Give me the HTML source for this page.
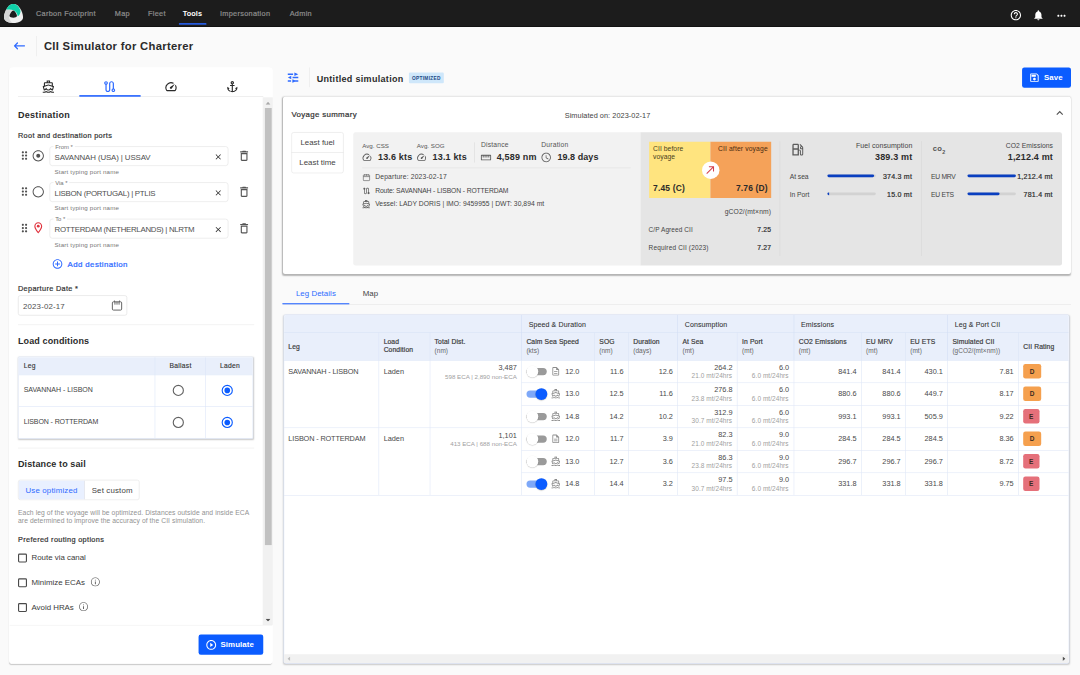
<!DOCTYPE html>
<html lang="en">
<head>
<meta charset="utf-8">
<title>CII Simulator for Charterer</title>
<style>
html,body{margin:0;padding:0;}
html{width:1080px;height:675px;overflow:hidden;background:#fafafa;}
body{width:1920px;height:1200px;position:relative;transform:scale(.5625);transform-origin:0 0;background:#fafafa;
  font-family:"Liberation Sans",sans-serif;font-size:14px;color:#333;overflow:hidden;}
*{box-sizing:border-box;}
.abs{position:absolute;}
svg{display:block;}
b,.b{font-weight:bold;}
/* NAV */
#nav{position:absolute;left:0;top:0;width:1920px;height:47.500px;background:#1c1c1c;border-bottom:1px solid #0c0c0c;}
#nav .it{position:absolute;top:17px;font-size:13px;font-weight:normal;-webkit-text-stroke:.36px;letter-spacing:.55px;color:#8d8d8d;white-space:nowrap;line-height:16px;}
#nav .it.on{color:#fff;font-weight:bold;-webkit-text-stroke:0;letter-spacing:.1px;}
#nav .ul{position:absolute;left:318px;top:41px;width:49px;height:3px;background:#2559dc;border-radius:1px;}
/* TITLE */
#ttl{position:absolute;left:78px;top:68.700px;font-size:20px;font-weight:bold;color:#2b2b2b;line-height:26px;letter-spacing:.55px;white-space:nowrap;}
.vdiv{position:absolute;width:1px;background:#e6e6e6;}
/* CARDS */
.card{position:absolute;background:#fff;border-radius:6px;box-shadow:0 1px 3px rgba(0,0,0,.12),0 1px 1px rgba(0,0,0,.06);}

.h16{font-size:16px;font-weight:bold;color:#2b2b2b;line-height:20px;letter-spacing:.5px;white-space:nowrap;}
.lab{font-size:13px;font-weight:normal;-webkit-text-stroke:.36px;color:#333;line-height:16px;letter-spacing:.6px;white-space:nowrap;}
.hr{left:15px;width:420px;height:1px;background:#e9e9e9;}
.prow{position:absolute;left:0;width:449px;height:64px;}
.prow .drag{left:15px;top:6px;}
.prow .pin{left:39px;top:6px;}
.prow .inp{position:absolute;left:71px;top:.500px;width:318px;height:35px;border:1px solid #e0e0e0;border-radius:5px;background:#fff;}
.prow .fl{position:absolute;left:6px;top:-7px;padding:0 3px;background:#fff;font-size:10.500px;line-height:12px;color:#777;white-space:nowrap;}
.prow .tx{position:absolute;left:8px;top:9px;font-size:14px;line-height:18px;color:#505050;white-space:nowrap;letter-spacing:-.2px;}
.prow .clr{left:291px;top:10px;}
.prow .del{left:404.500px;top:6px;}
.prow .hlp{position:absolute;left:80px;top:41px;font-size:11px;line-height:13px;color:#777;white-space:nowrap;letter-spacing:.3px;}
.ltab{border:1px solid #dbe5f8;border-radius:2px;background:#fff;box-shadow:0 2px 3px rgba(0,0,0,.22);overflow:hidden;}
.ltab .th{font-size:12px;font-weight:normal;-webkit-text-stroke:.22px;letter-spacing:.5px;color:#333;line-height:14px;}
.ltab .td{font-size:12.500px;color:#444;line-height:14px;letter-spacing:-.2px;}
.rad{width:20px;height:20px;border-radius:50%;border:2px solid #636363;background:#fff;}
.rad.on{border-color:#0b5cff;border-width:2px;}
.rad.on i{position:absolute;left:3px;top:3px;width:10px;height:10px;border-radius:50%;background:#0b5cff;}
.cb{left:15px;width:16px;height:16px;border:2px solid #4a4a4a;border-radius:2.500px;background:#fff;margin-top:1.500px;}
.cbl{left:39px;font-size:14px;line-height:18px;color:#3a3a3a;white-space:nowrap;}
.btn{background:#0b5cff;border-radius:4px;}

.sl{font-size:11px;line-height:14px;color:#555;white-space:nowrap;letter-spacing:0;}
.sv{font-size:16px;font-weight:bold;line-height:20px;color:#2b2b2b;white-space:nowrap;letter-spacing:.3px;}
.dl{font-size:12px;line-height:15px;color:#444;white-space:nowrap;letter-spacing:-.1px;}
.bar{width:86px;height:5px;border-radius:3px;background:#d2d2d2;}
.bar i{position:absolute;left:0;top:0;height:5px;border-radius:3px;background:#0a3fc0;}
.bv{width:78.500px;text-align:right;font-size:12.500px;font-weight:normal;-webkit-text-stroke:.33px;letter-spacing:.4px;line-height:15px;color:#2b2b2b;white-space:nowrap;}

#tbl{position:absolute;overflow:hidden;background:#fff;border:1px solid #d3def5;border-radius:4px;box-shadow:0 2px 3px rgba(0,0,0,.2);}
.gh{font-size:12.500px;font-weight:normal;-webkit-text-stroke:.12px;line-height:15px;color:#333;white-space:nowrap;letter-spacing:.2px;}
.ch{font-size:12px;font-weight:normal;-webkit-text-stroke:.33px #3a3a3a;line-height:15.500px;color:#3a3a3a;white-space:nowrap;letter-spacing:.2px;}
.ch .u{font-weight:normal;-webkit-text-stroke:0;color:#666;font-size:11.500px;letter-spacing:.05px;}
.td{font-size:13px;line-height:16px;color:#4a4a4a;white-space:nowrap;}
.sub{font-size:11.500px;line-height:12px;color:#a0a0a0;white-space:nowrap;letter-spacing:.12px;}
.rt{width:32px;height:26px;border-radius:4px;font-size:11.500px;font-weight:bold;line-height:26px;text-align:center;color:#3a2a20;}
</style>
</head>
<body>
<!-- ================= NAV ================= -->
<div id="nav">
  <svg class="abs" style="left:7px;top:7px" width="34" height="34" viewBox="0 0 100 100">
    <path d="M50 0C80 0 100 46 100 70C100 92 74 100 50 100C26 100 0 92 0 70C0 46 20 0 50 0Z" fill="#f0f0f0"/>
    <path d="M13 31C4 45 0 60 0 70C0 90 22 99 46 100C36 92 29 84 27 72C24 60 30 45 50 33C38 29 24 29 13 31Z" fill="#d6d6d6"/>
    <path d="M12 31C20 12 34 0 50 0C66 0 78 14 85 32C89 44 84 58 72 64C70 50 62 38 50 33C38 29 24 29 12 31Z" fill="#0fd0a8"/>
    <path d="M49 34C56 34 68 54 68 62C68 70 58 72 49 72C40 72 29 70 29 62C29 54 42 34 49 34Z" fill="#1c1c1c"/>
  </svg>
  <div class="it" style="left:64px">Carbon Footprint</div>
  <div class="it" style="left:204px">Map</div>
  <div class="it" style="left:263px">Fleet</div>
  <div class="it on" style="left:325px">Tools</div>
  <div class="it" style="left:391px">Impersonation</div>
  <div class="it" style="left:515px">Admin</div>
  <div class="ul"></div>
  <svg class="abs" style="left:1795px;top:16px" width="22" height="22" viewBox="0 0 24 24" fill="#fff"><path d="M11 18h2v-2h-2v2zm1-16C6.48 2 2 6.48 2 12s4.48 10 10 10 10-4.48 10-10S17.52 2 12 2zm0 18c-4.41 0-8-3.59-8-8s3.59-8 8-8 8 3.59 8 8-3.59 8-8 8zm0-14c-2.210 0-4 1.79-4 4h2c0-1.1.9-2 2-2s2 .9 2 2c0 2-3 1.75-3 5h2c0-2.25 3-2.5 3-5 0-2.21-1.79-4-4-4z"/></svg>
  <svg class="abs" style="left:1835px;top:16px" width="22" height="22" viewBox="0 0 24 24" fill="#fff"><path d="M12 22c1.1 0 2-.9 2-2h-4c0 1.1.89 2 2 2zm6-6v-5c0-3.07-1.64-5.64-4.5-6.32V4c0-.83-.67-1.5-1.5-1.5s-1.5.67-1.5 1.5v.68C7.63 5.36 6 7.92 6 11v5l-2 2v1h16v-1l-2-2z"/></svg>
  <svg class="abs" style="left:1876px;top:17px" width="22" height="22" viewBox="0 0 24 24" fill="#fff"><path d="M6 10c-1.1 0-2 .9-2 2s.9 2 2 2 2-.9 2-2-.9-2-2-2zm12 0c-1.1 0-2 .9-2 2s.9 2 2 2 2-.9 2-2-.9-2-2-2zm-6 0c-1.1 0-2 .9-2 2s.9 2 2 2 2-.9 2-2-.9-2-2-2z"/></svg>
</div>

<!-- ================= TITLE ROW ================= -->
<svg class="abs" style="left:23px;top:73px" width="24" height="17" viewBox="0 0 24 17" fill="none" stroke="#2f6bff" stroke-width="2.300" stroke-linecap="round" stroke-linejoin="round"><path d="M20.500 8.500H3M8 3.300L2.800 8.500L8 13.700"/></svg>
<div class="vdiv" style="left:64px;top:64px;height:36px"></div>
<div id="ttl">CII Simulator for Charterer</div>

<!-- ================= LEFT CARD ================= -->
<div class="card" id="left" style="left:17px;top:120px;width:467.500px;height:1059.500px;box-shadow:-1px 0 0 0 #fff,-1px 2.500px 2px -1px rgba(0,0,0,.2);">
<!--LEFT-START-->
  <!-- tabs -->
  <div class="abs" style="left:15px;top:51px;width:436px;height:1px;background:#e3e3e3"></div>
  <div class="abs" style="left:124px;top:49px;width:109px;height:3px;background:#2f6bff"></div>
  <svg class="abs" style="left:57px;top:22px" width="24" height="24" viewBox="0 0 24 24" fill="#2b2b2b"><path d="M13 3v1h-2V3h2m-1 7.11l5.38 1.77 2.39.78-1.12 3.97c-.54-.3-.94-.71-1.14-.94L16 13.96l-1.51 1.72c-.34.4-1.28 1.32-2.49 1.32s-2.15-.92-2.49-1.32L8 13.96l-1.51 1.72c-.2.23-.6.63-1.14.93l-1.13-3.96 2.4-.79L12 10.11M15 1H9v3H6c-1.1 0-2 .9-2 2v4.62l-1.29.42c-.26.08-.48.26-.6.5s-.15.52-.06.78L3.950 19H4c1.6 0 3.02-.88 4-2 .98 1.12 2.4 2 4 2s3.02-.88 4-2c.98 1.12 2.4 2 4 2h.05l1.89-6.680c.08-.26.06-.54-.06-.78s-.34-.42-.6-.5L20 10.620V6c0-1.1-.9-2-2-2h-3V1zM6 9.970V6h12v3.970L12 8 6 9.970zm10 9.710c-1.220.85-2.610 1.280-4 1.280s-2.780-.43-4-1.280C6.780 20.530 5.390 21 4 21H2v2h2c1.380 0 2.740-.35 4-.99 1.260.64 2.630.97 4 .97s2.740-.32 4-.97c1.260.65 2.620.99 4 .99h2v-2h-2c-1.390 0-2.780-.47-4-1.320z"/></svg>
  <svg class="abs" style="left:165px;top:21px" width="26" height="26" viewBox="0 0 24 24" fill="#2f6bff"><path d="M19 15.180V7c0-2.210-1.790-4-4-4s-4 1.790-4 4v10c0 1.100-.9 2-2 2s-2-.9-2-2V8.820C8.160 8.400 9 7.300 9 6c0-1.660-1.340-3-3-3S3 4.340 3 6c0 1.300.84 2.400 2 2.820V17c0 2.210 1.790 4 4 4s4-1.790 4-4V7c0-1.100.9-2 2-2s2 .9 2 2v8.180c-1.160.41-2 1.510-2 2.820 0 1.660 1.340 3 3 3s3-1.340 3-3c0-1.300-.84-2.400-2-2.820z"/><circle cx="6" cy="6" r="1.100" fill="#fff"/><circle cx="18" cy="18" r="1.100" fill="#fff"/></svg>
  <svg class="abs" style="left:275px;top:22px" width="24" height="24" viewBox="0 0 24 24" fill="#2b2b2b"><path d="M20.380 8.570l-1.230 1.850a8 8 0 0 1-.22 7.580H5.070A8 8 0 0 1 15.580 6.850l1.850-1.230A10 10 0 0 0 3.350 19a2 2 0 0 0 1.720 1h13.850a2 2 0 0 0 1.740-1 10 10 0 0 0-.27-10.440zm-9.790 6.840a2 2 0 0 0 2.830 0l5.660-8.490-8.490 5.660a2 2 0 0 0 0 2.830z"/></svg>
  <svg class="abs" style="left:384px;top:22px" width="24" height="24" viewBox="0 0 24 24" fill="#2b2b2b"><path d="M17 15l1.550 1.550c-.96 1.690-3.330 3.040-5.550 3.370V11h3V9h-3V7.820C14.160 7.400 15 6.300 15 5c0-1.650-1.350-3-3-3S9 3.350 9 5c0 1.300.84 2.400 2 2.820V9H8v2h3v8.920c-2.220-.33-4.590-1.680-5.550-3.370L7 15l-4-3v3c0 3.880 4.920 7 9 7s9-3.120 9-7v-3l-4 3zM12 4c.55 0 1 .45 1 1s-.45 1-1 1-1-.45-1-1 .45-1 1-1z"/></svg>

  <!-- scrollbar -->
  <div class="abs" style="left:450px;top:53px;width:17.500px;height:938px;background:#f1f1f1"></div>
  <div class="abs" style="left:453.500px;top:72px;width:12px;height:777px;background:#c1c1c1"></div>
  <svg class="abs" style="left:455px;top:61px" width="9" height="5" viewBox="0 0 9 5"><path d="M0 5L4.500 0L9 5z" fill="#a8a8a8"/></svg>
  <svg class="abs" style="left:455px;top:980px" width="9" height="5" viewBox="0 0 9 5"><path d="M0 0L4.500 5L9 0z" fill="#505050"/></svg>

  <!-- Destination -->
  <div class="h16 abs" style="left:15px;top:74px">Destination</div>
  <div class="lab abs" style="left:15px;top:114px">Root and destination ports</div>

  <!-- rows -->
  <div class="prow" style="top:139px">
    <svg class="abs drag" width="23" height="23" viewBox="0 0 24 24" fill="#505050"><path d="M11 18c0 1.100-.9 2-2 2s-2-.9-2-2 .9-2 2-2 2 .9 2 2zm-2-8c-1.100 0-2 .9-2 2s.9 2 2 2 2-.9 2-2-.9-2-2-2zm0-6c-1.100 0-2 .9-2 2s.9 2 2 2 2-.9 2-2-.9-2-2-2zm6 4c1.100 0 2-.9 2-2s-.9-2-2-2-2 .9-2 2 .9 2 2 2zm0 2c-1.100 0-2 .9-2 2s.9 2 2 2 2-.9 2-2-.9-2-2-2zm0 6c-1.100 0-2 .9-2 2s.9 2 2 2 2-.9 2-2-.9-2-2-2z"/></svg>
    <svg class="abs pin" width="24" height="24" viewBox="0 0 24 24" fill="#505050"><path d="M12 8.500c-1.930 0-3.500 1.570-3.500 3.500s1.570 3.500 3.500 3.500 3.500-1.570 3.500-3.500-1.570-3.500-3.500-3.500zm0-6.500C6.480 2 2 6.480 2 12s4.480 10 10 10 10-4.480 10-10S17.520 2 12 2zm0 18.300c-4.580 0-8.300-3.720-8.300-8.300s3.720-8.300 8.300-8.300 8.300 3.720 8.300 8.300-3.720 8.300-8.300 8.300z"/></svg>
    <div class="inp"><span class="fl">From *</span><span class="tx">SAVANNAH (USA) | USSAV</span>
      <svg class="abs clr" width="16" height="16" viewBox="0 0 24 24" fill="#2b2b2b"><path d="M19 6.410L17.590 5 12 10.590 6.410 5 5 6.410 10.590 12 5 17.590 6.410 19 12 13.410 17.590 19 19 17.590 13.410 12z"/></svg>
    </div>
    <svg class="abs del" width="24" height="24" viewBox="0 0 24 24" fill="#555"><path d="M6 19c0 1.100.9 2 2 2h8c1.100 0 2-.9 2-2V7H6v12zM8 9h8v10H8V9zm7.500-5l-1-1h-5l-1 1H5v2h14V4z"/></svg>
    <div class="hlp">Start typing port name</div>
  </div>
  <div class="prow" style="top:203px">
    <svg class="abs drag" width="23" height="23" viewBox="0 0 24 24" fill="#505050"><path d="M11 18c0 1.100-.9 2-2 2s-2-.9-2-2 .9-2 2-2 2 .9 2 2zm-2-8c-1.100 0-2 .9-2 2s.9 2 2 2 2-.9 2-2-.9-2-2-2zm0-6c-1.100 0-2 .9-2 2s.9 2 2 2 2-.9 2-2-.9-2-2-2zm6 4c1.100 0 2-.9 2-2s-.9-2-2-2-2 .9-2 2 .9 2 2 2zm0 2c-1.100 0-2 .9-2 2s.9 2 2 2 2-.9 2-2-.9-2-2-2zm0 6c-1.100 0-2 .9-2 2s.9 2 2 2 2-.9 2-2-.9-2-2-2z"/></svg>
    <svg class="abs pin" width="24" height="24" viewBox="0 0 24 24" fill="#505050"><path d="M12 2C6.480 2 2 6.480 2 12s4.480 10 10 10 10-4.480 10-10S17.520 2 12 2zm0 18.300c-4.580 0-8.300-3.720-8.300-8.300s3.720-8.300 8.300-8.300 8.300 3.720 8.300 8.300-3.720 8.300-8.300 8.300z"/></svg>
    <div class="inp"><span class="fl">Via *</span><span class="tx" style="letter-spacing:-.5px">LISBON (PORTUGAL) | PTLIS</span>
      <svg class="abs clr" width="16" height="16" viewBox="0 0 24 24" fill="#2b2b2b"><path d="M19 6.410L17.590 5 12 10.590 6.410 5 5 6.410 10.590 12 5 17.590 6.410 19 12 13.410 17.590 19 19 17.590 13.410 12z"/></svg>
    </div>
    <svg class="abs del" width="24" height="24" viewBox="0 0 24 24" fill="#555"><path d="M6 19c0 1.100.9 2 2 2h8c1.100 0 2-.9 2-2V7H6v12zM8 9h8v10H8V9zm7.500-5l-1-1h-5l-1 1H5v2h14V4z"/></svg>
    <div class="hlp">Start typing port name</div>
  </div>
  <div class="prow" style="top:268px">
    <svg class="abs drag" width="23" height="23" viewBox="0 0 24 24" fill="#505050"><path d="M11 18c0 1.100-.9 2-2 2s-2-.9-2-2 .9-2 2-2 2 .9 2 2zm-2-8c-1.100 0-2 .9-2 2s.9 2 2 2 2-.9 2-2-.9-2-2-2zm0-6c-1.100 0-2 .9-2 2s.9 2 2 2 2-.9 2-2-.9-2-2-2zm6 4c1.100 0 2-.9 2-2s-.9-2-2-2-2 .9-2 2 .9 2 2 2zm0 2c-1.100 0-2 .9-2 2s.9 2 2 2 2-.9 2-2-.9-2-2-2zm0 6c-1.100 0-2 .9-2 2s.9 2 2 2 2-.9 2-2-.9-2-2-2z"/></svg>
    <svg class="abs pin" width="24" height="24" viewBox="0 0 24 24" fill="#e0343f" style="left:39px;top:5px"><path d="M12 2C8.130 2 5 5.130 5 9c0 5.250 7 13 7 13s7-7.750 7-13c0-3.870-3.130-7-7-7zM7 9c0-2.760 2.240-5 5-5s5 2.240 5 5c0 2.880-2.880 7.190-5 9.880C9.920 16.210 7 11.850 7 9z"/><circle cx="12" cy="9" r="2.500"/></svg>
    <div class="inp"><span class="fl">To *</span><span class="tx" style="letter-spacing:-.55px">ROTTERDAM (NETHERLANDS) | NLRTM</span>
      <svg class="abs clr" width="16" height="16" viewBox="0 0 24 24" fill="#2b2b2b"><path d="M19 6.410L17.590 5 12 10.590 6.410 5 5 6.410 10.590 12 5 17.590 6.410 19 12 13.410 17.590 19 19 17.590 13.410 12z"/></svg>
    </div>
    <svg class="abs del" width="24" height="24" viewBox="0 0 24 24" fill="#555"><path d="M6 19c0 1.100.9 2 2 2h8c1.100 0 2-.9 2-2V7H6v12zM8 9h8v10H8V9zm7.500-5l-1-1h-5l-1 1H5v2h14V4z"/></svg>
    <div class="hlp">Start typing port name</div>
  </div>

  <!-- add destination -->
  <svg class="abs" style="left:75px;top:338.500px" width="20.500" height="20.500" viewBox="0 0 24 24" fill="#2f6bff"><path d="M13 7h-2v4H7v2h4v4h2v-4h4v-2h-4V7zm-1-5C6.480 2 2 6.480 2 12s4.480 10 10 10 10-4.480 10-10S17.520 2 12 2zm0 18c-4.410 0-8-3.590-8-8s3.590-8 8-8 8 3.590 8 8-3.590 8-8 8z"/></svg>
  <div class="abs" style="left:103px;top:339.500px;font-size:14px;font-weight:normal;-webkit-text-stroke:.42px;color:#2f6bff;line-height:18px;letter-spacing:.72px">Add destination</div>

  <!-- departure -->
  <div class="lab abs" style="left:15px;top:386px">Departure Date *</div>
  <div class="abs" style="left:15px;top:405px;width:194px;height:36px;border:1px solid #dcdcdc;border-radius:4px;background:#fff">
    <span class="abs" style="left:8px;top:9px;font-size:14px;line-height:18px;color:#505050;letter-spacing:.25px">2023-02-17</span>
    <svg class="abs" style="left:164px;top:6px" width="22" height="22" viewBox="0 0 24 24" fill="none" stroke="#5a5a5a" stroke-width="1.800"><rect x="3" y="5" width="18" height="16" rx="2"/><path d="M7 2.500v2.500M17 2.500v2.500M8 5v5.500M12 5v5.500M16 5v5.500"/></svg>
  </div>
  <div class="hr abs" style="top:457px"></div>

  <!-- load conditions -->
  <div class="h16 abs" style="left:15px;top:477px;letter-spacing:.2px">Load conditions</div>
  <div class="abs ltab" style="left:15px;top:514px;width:418px;height:146px">
    <div class="abs" style="left:0;top:0;width:418px;height:31px;background:#e9effb"></div>
    <div class="abs" style="left:0;top:31px;width:418px;height:1px;background:#dbe5f8"></div>
    <div class="abs" style="left:0;top:87px;width:418px;height:1px;background:#dbe5f8"></div>
    <div class="abs" style="left:242px;top:0;width:1px;height:144px;background:#dbe5f8"></div>
    <div class="abs" style="left:332px;top:0;width:1px;height:144px;background:#dbe5f8"></div>
    <div class="abs th" style="left:9px;top:9px">Leg</div>
    <div class="abs th" style="left:243px;top:9px;width:90px;text-align:center">Ballast</div>
    <div class="abs th" style="left:333px;top:9px;width:86px;text-align:center">Laden</div>
    <div class="abs td" style="left:9px;top:51px;letter-spacing:-.05px">SAVANNAH - LISBON</div>
    <div class="abs td" style="left:9px;top:108px">LISBON - ROTTERDAM</div>
    <div class="abs rad" style="left:274px;top:49px"></div>
    <div class="abs rad on" style="left:361px;top:49px"><i></i></div>
    <div class="abs rad" style="left:274px;top:105.500px"></div>
    <div class="abs rad on" style="left:361px;top:105.500px"><i></i></div>
  </div>
  <div class="hr abs" style="top:676px"></div>

  <!-- distance to sail -->
  <div class="h16 abs" style="left:15px;top:695px;letter-spacing:.2px">Distance to sail</div>
  <div class="abs" style="left:15px;top:733px;width:216px;height:36px;border:1px solid #e2e2e2;border-radius:4px;background:#fff;overflow:hidden">
    <div class="abs" style="left:0;top:0;width:117.500px;height:34px;background:#e9f0ff;border-right:1px solid #e2e2e2"></div>
    <div class="abs" style="left:0;top:8px;width:117px;text-align:center;font-size:14px;line-height:18px;color:#2f6bff;letter-spacing:.3px">Use optimized</div>
    <div class="abs" style="left:118px;top:8px;width:97px;text-align:center;font-size:14px;line-height:18px;color:#444;letter-spacing:.3px">Set custom</div>
  </div>
  <div class="abs" style="left:15px;top:786px;width:430px;font-size:12px;line-height:13.300px;color:#929292;letter-spacing:.14px;white-space:nowrap">Each leg of the voyage will be optimized. Distances outside and inside ECA<br>are determined to improve the accuracy of the CII simulation.</div>
  <div class="lab abs" style="left:15px;top:832px">Prefered routing options</div>

  <div class="abs cb" style="top:862px"></div><div class="abs cbl" style="top:862px">Route via canal</div>
  <div class="abs cb" style="top:906px"></div><div class="abs cbl" style="top:906px">Minimize ECAs</div>
  <svg class="abs" style="left:143px;top:905px" width="19" height="19" viewBox="0 0 24 24" fill="#555"><path d="M11 7h2v2h-2zm0 4h2v6h-2zm1-9C6.480 2 2 6.480 2 12s4.480 10 10 10 10-4.480 10-10S17.520 2 12 2zm0 18.500c-4.690 0-8.500-3.810-8.500-8.500S7.310 3.500 12 3.500s8.500 3.810 8.500 8.500-3.810 8.500-8.500 8.500z"/></svg>
  <div class="abs cb" style="top:950px"></div><div class="abs cbl" style="top:950px">Avoid HRAs</div>
  <svg class="abs" style="left:122px;top:949px" width="19" height="19" viewBox="0 0 24 24" fill="#555"><path d="M11 7h2v2h-2zm0 4h2v6h-2zm1-9C6.480 2 2 6.480 2 12s4.480 10 10 10 10-4.480 10-10S17.520 2 12 2zm0 18.500c-4.690 0-8.500-3.810-8.500-8.500S7.310 3.500 12 3.500s8.500 3.810 8.500 8.500-3.810 8.500-8.500 8.500z"/></svg>

  <!-- footer -->
  <div class="abs" style="left:0;top:991px;width:467px;height:1px;background:#efefef"></div>
  <div class="abs btn" style="left:335.500px;top:1008px;width:115.500px;height:36px">
    <svg class="abs" style="left:12px;top:7.500px" width="21" height="21" viewBox="0 0 24 24" fill="#fff"><path d="M10 16.500l6-4.500-6-4.500v9zM12 2C6.480 2 2 6.480 2 12s4.480 10 10 10 10-4.480 10-10S17.520 2 12 2zm0 18c-4.410 0-8-3.590-8-8s3.590-8 8-8 8 3.590 8 8-3.590 8-8 8z"/></svg>
    <span class="abs" style="left:39.500px;top:10px;font-size:14px;font-weight:bold;line-height:17px;color:#fff;letter-spacing:.15px">Simulate</span>
  </div>
<!--LEFT-END-->
</div>

<!-- ================= RIGHT TOOLBAR ================= -->
<div id="rtool">
<!--RTOOL-START-->
  <svg class="abs" style="left:508.500px;top:126px" width="24" height="24" viewBox="0 0 24 24" fill="#2f6bff"><path d="M2.600 4.700h9.500v2.600H2.600z M14.300 3v6l7-3z M8.800 8.800v6l-6-3z M11.100 10.500h10.200v2.600H11.100z M2.600 16.700h5.900v2.600H2.600z M10.700 15v6l4.500-1.700h6.100v-2.600h-6.100z"/></svg>
  <div class="vdiv" style="left:550px;top:120px;height:35px"></div>
  <div class="abs" style="left:563px;top:129.500px;font-size:16px;font-weight:bold;color:#2b2b2b;line-height:20px;letter-spacing:.55px;white-space:nowrap">Untitled simulation</div>
  <div class="abs" style="left:727px;top:129px;width:62px;height:19px;background:#cfe7fa;border-radius:2px;font-size:8.500px;font-weight:bold;color:#1b4a86;line-height:22px;text-align:center;letter-spacing:.55px;overflow:hidden">OPTIMIZED</div>
  <div class="abs btn" style="left:1817px;top:120px;width:87px;height:36px">
    <svg class="abs" style="left:12px;top:8px" width="20" height="20" viewBox="0 0 24 24" fill="#fff"><path d="M17 3H5c-1.110 0-2 .9-2 2v14c0 1.100.89 2 2 2h14c1.100 0 2-.9 2-2V7l-4-4zm2 16H5V5h11.170L19 7.830V19zm-7-7c-1.660 0-3 1.340-3 3s1.340 3 3 3 3-1.340 3-3-1.340-3-3-3zM6 6h9v4H6z"/></svg>
    <span class="abs" style="left:39px;top:10px;font-size:14px;font-weight:bold;line-height:17px;color:#fff;letter-spacing:.1px">Save</span>
  </div>
<!--RTOOL-END-->
</div>

<!-- ================= VOYAGE SUMMARY CARD ================= -->
<div class="card" id="voy" style="left:503px;top:172px;width:1401px;height:315px;border-radius:4px;box-shadow:0 2px 2.500px rgba(0,0,0,.27),0 0 3px rgba(0,0,0,.07);">
<!--VOY-START-->
  <div class="abs" style="left:15px;top:22px;font-size:14px;font-weight:normal;-webkit-text-stroke:.38px;color:#333;line-height:18px;letter-spacing:.6px;white-space:nowrap">Voyage summary</div>
  <div class="abs" style="left:501px;top:25px;font-size:13px;color:#444;line-height:16px;white-space:nowrap;letter-spacing:.1px">Simulated on: 2023-02-17</div>
  <svg class="abs" style="left:1369px;top:17px" width="24" height="24" viewBox="0 0 24 24" fill="#555"><path d="M12 8l-6 6 1.410 1.410L12 10.830l4.590 4.580L18 14z"/></svg>

  <!-- least fuel / time -->
  <div class="abs" style="left:15px;top:63px;width:93px;height:73px;border:1px solid #e2e2e2;border-radius:4px;background:#fff"></div>
  <div class="abs" style="left:15px;top:99px;width:93px;height:1px;background:#e2e2e2"></div>
  <div class="abs" style="left:15px;top:72px;width:93px;text-align:center;font-size:14px;line-height:18px;color:#444">Least fuel</div>
  <div class="abs" style="left:15px;top:108px;width:93px;text-align:center;font-size:14px;line-height:18px;color:#444">Least time</div>

  <!-- grey panels -->
  <div class="abs" style="left:125px;top:63px;width:512px;height:237px;background:#f2f2f2;border-radius:4px 0 0 4px"></div>
  <div class="abs" style="left:636px;top:63px;width:749px;height:237px;background:#e5e5e5;border-radius:0 4px 4px 0"></div>

  <!-- stats -->
  <div class="abs sl" style="left:141px;top:80px">Avg. CSS</div>
  <div class="abs sl" style="left:238px;top:80px">Avg. SOG</div>
  <div class="abs sl" style="left:352px;top:79px;font-size:12px;letter-spacing:.35px">Distance</div>
  <div class="abs sl" style="left:459px;top:79px;font-size:12px;letter-spacing:.4px">Duration</div>
  <div class="abs" style="left:340px;top:81px;width:1px;height:36px;background:#dadada"></div>
  <svg class="abs" style="left:140px;top:98px" width="19" height="19" viewBox="0 0 24 24" fill="#5c5c5c"><path d="M20.380 8.570l-1.230 1.850a8 8 0 0 1-.22 7.580H5.070A8 8 0 0 1 15.580 6.850l1.850-1.230A10 10 0 0 0 3.350 19a2 2 0 0 0 1.720 1h13.850a2 2 0 0 0 1.740-1 10 10 0 0 0-.27-10.440zm-9.790 6.840a2 2 0 0 0 2.830 0l5.660-8.490-8.490 5.660a2 2 0 0 0 0 2.830z"/></svg>
  <div class="abs sv" style="left:169px;top:96.500px">13.6 kts</div>
  <svg class="abs" style="left:237px;top:98px" width="19" height="19" viewBox="0 0 24 24" fill="#5c5c5c"><path d="M20.380 8.570l-1.230 1.850a8 8 0 0 1-.22 7.580H5.070A8 8 0 0 1 15.580 6.850l1.850-1.230A10 10 0 0 0 3.350 19a2 2 0 0 0 1.720 1h13.850a2 2 0 0 0 1.740-1 10 10 0 0 0-.27-10.440zm-9.790 6.840a2 2 0 0 0 2.830 0l5.660-8.490-8.490 5.660a2 2 0 0 0 0 2.830z"/></svg>
  <div class="abs sv" style="left:266px;top:96.500px">13.1 kts</div>
  <svg class="abs" style="left:351px;top:98px" width="20" height="20" viewBox="0 0 24 24" fill="#5c5c5c"><path d="M21 6H3c-1.100 0-2 .9-2 2v8c0 1.100.9 2 2 2h18c1.100 0 2-.9 2-2V8c0-1.100-.9-2-2-2zm0 10H3V8h2v4h2V8h2v4h2V8h2v4h2V8h2v4h2V8h2v8z"/></svg>
  <div class="abs sv" style="left:380px;top:96.500px">4,589 nm</div>
  <svg class="abs" style="left:458px;top:98px" width="20" height="20" viewBox="0 0 24 24" fill="#5c5c5c"><path d="M11.990 2C6.470 2 2 6.480 2 12s4.470 10 9.990 10C17.520 22 22 17.520 22 12S17.520 2 11.990 2zM12 20.300c-4.580 0-8.300-3.720-8.300-8.300s3.720-8.300 8.300-8.300 8.300 3.720 8.300 8.300-3.720 8.300-8.300 8.300zm.5-13.300H11v6l5.250 3.150.75-1.230-4.500-2.670z"/></svg>
  <div class="abs sv" style="left:488px;top:96.500px;letter-spacing:.1px">19.8 days</div>
  <div class="abs" style="left:141px;top:126px;width:477px;height:1px;background:#dedede"></div>

  <svg class="abs" style="left:141px;top:136px" width="15" height="15" viewBox="0 0 24 24" fill="none" stroke="#5c5c5c" stroke-width="1.800"><rect x="3" y="4.500" width="18" height="16.500" rx="2"/><path d="M3 9.500h18M7 2.500v5M12 2.500v5M17 2.500v5"/></svg>
  <div class="abs dl" style="left:164px;top:136px;letter-spacing:.29px">Departure: 2023-02-17</div>
  <svg class="abs" style="left:141px;top:160px" width="15" height="15" viewBox="0 0 24 24" fill="#5c5c5c"><path d="M19 15.180V7c0-2.210-1.790-4-4-4s-4 1.790-4 4v10c0 1.100-.9 2-2 2s-2-.9-2-2V8.820C8.160 8.400 9 7.300 9 6c0-1.660-1.340-3-3-3S3 4.340 3 6c0 1.300.84 2.400 2 2.820V17c0 2.210 1.790 4 4 4s4-1.790 4-4V7c0-1.100.9-2 2-2s2 .9 2 2v8.180c-1.160.41-2 1.510-2 2.820 0 1.660 1.340 3 3 3s3-1.340 3-3c0-1.300-.84-2.400-2-2.820z"/></svg>
  <div class="abs dl" style="left:164px;top:160px;letter-spacing:-.21px">Route: SAVANNAH - LISBON - ROTTERDAM</div>
  <svg class="abs" style="left:140px;top:183px" width="16" height="16" viewBox="0 0 24 24" fill="#5c5c5c"><path d="M13 3v1h-2V3h2m-1 7.110l5.380 1.770 2.390.78-1.120 3.970c-.54-.3-.94-.71-1.140-.94L16 13.960l-1.510 1.720c-.34.4-1.280 1.320-2.490 1.320s-2.150-.92-2.490-1.320L8 13.960l-1.510 1.720c-.2.23-.6.63-1.140.93l-1.130-3.960 2.400-.79L12 10.110M15 1H9v3H6c-1.100 0-2 .9-2 2v4.620l-1.290.42c-.26.08-.48.26-.6.5s-.15.52-.06.78L3.950 19H4c1.600 0 3.020-.88 4-2 .98 1.120 2.400 2 4 2s3.020-.88 4-2c.98 1.120 2.400 2 4 2h.05l1.890-6.680c.08-.26.06-.54-.06-.78s-.34-.42-.6-.5L20 10.620V6c0-1.100-.9-2-2-2h-3V1zM6 9.970V6h12v3.970L12 8 6 9.970zm10 9.710c-1.220.85-2.610 1.280-4 1.280s-2.780-.43-4-1.280C6.780 20.530 5.390 21 4 21H2v2h2c1.380 0 2.740-.35 4-.99 1.260.64 2.630.97 4 .97s2.740-.32 4-.97c1.260.65 2.620.99 4 .99h2v-2h-2c-1.390 0-2.780-.47-4-1.320z"/></svg>
  <div class="abs dl" style="left:164px;top:184px;letter-spacing:.09px">Vessel: LADY DORIS | IMO: 9459955 | DWT: 30,894 mt</div>

  <!-- CII boxes -->
  <div class="abs" style="left:651px;top:80px;width:109px;height:100px;background:#ffe47f"></div>
  <div class="abs" style="left:760px;top:80px;width:108px;height:100px;background:#f5a259"></div>
  <div class="abs" style="left:658px;top:85px;font-size:12px;line-height:15px;color:#4a4120;white-space:nowrap;letter-spacing:.1px">CII before<br>voyage</div>
  <div class="abs" style="left:762px;top:85px;width:100px;text-align:right;font-size:12px;line-height:15px;color:#4a2c10;white-space:nowrap;letter-spacing:.25px">CII after voyage</div>
  <div class="abs" style="left:658px;top:154px;font-size:15px;font-weight:bold;line-height:18px;color:#2b2b2b;white-space:nowrap;letter-spacing:.3px">7.45 (C)</div>
  <div class="abs" style="left:762px;top:154px;width:100px;text-align:right;font-size:15px;font-weight:bold;line-height:18px;color:#2b2b2b;white-space:nowrap;letter-spacing:.3px">7.76 (D)</div>
  <div class="abs" style="left:744.500px;top:114.500px;width:31px;height:31px;border-radius:50%;background:#fff"></div>
  <svg class="abs" style="left:749px;top:119px" width="22" height="22" viewBox="0 0 24 24" fill="#d4404c"><path d="M9 5v2h6.590L4 18.590 5.410 20 17 8.410V15h2V5z"/></svg>
  <div class="abs" style="left:700px;top:198px;width:168px;text-align:right;font-size:12px;line-height:14px;color:#444;white-space:nowrap;letter-spacing:.25px">gCO2/(mt×nm)</div>
  <div class="abs" style="left:650px;top:230px;font-size:11.500px;line-height:14px;color:#444;white-space:nowrap;letter-spacing:.15px">C/P Agreed CII</div>
  <div class="abs" style="left:768px;top:231px;width:100px;text-align:right;font-size:12px;font-weight:normal;-webkit-text-stroke:.33px;letter-spacing:.3px;line-height:14px;color:#2b2b2b;margin-top:-1px">7.25</div>
  <div class="abs" style="left:650px;top:261px;font-size:11.500px;line-height:14px;color:#444;white-space:nowrap;letter-spacing:.3px">Required CII (2023)</div>
  <div class="abs" style="left:768px;top:262px;width:100px;text-align:right;font-size:12px;font-weight:normal;-webkit-text-stroke:.33px;letter-spacing:.3px;line-height:14px;color:#2b2b2b">7.27</div>
  <div class="abs" style="left:883px;top:79px;width:1px;height:204px;background:#d6d6d6"></div>

  <!-- fuel -->
  <svg class="abs" style="left:901px;top:80px" width="28" height="28" viewBox="0 0 24 24" fill="#5c5c5c"><path d="M19.770 7.230l.01-.01-3.720-3.720L15 4.560l2.110 2.110c-.94.36-1.610 1.260-1.610 2.330 0 1.380 1.120 2.500 2.500 2.500.36 0 .69-.08 1-.21v7.210c0 .55-.45 1-1 1s-1-.45-1-1V14c0-1.100-.9-2-2-2h-1V5c0-1.100-.9-2-2-2H6c-1.100 0-2 .9-2 2v16h10v-7.500h1.500v5c0 1.380 1.120 2.500 2.500 2.500s2.500-1.120 2.500-2.500V9c0-.69-.28-1.320-.73-1.770zM12 13.500V19H6v-7h6v1.500zm0-3.500H6V5h6v5zm6 0c-.55 0-1-.45-1-1s.45-1 1-1 1 .45 1 1-.45 1-1 1z"/></svg>
  <div class="abs" style="left:960px;top:79.500px;width:159px;text-align:right;font-size:12.500px;line-height:14px;color:#444;white-space:nowrap;letter-spacing:.1px">Fuel consumption</div>
  <div class="abs sv" style="left:960px;top:97px;width:159px;text-align:right">389.3 mt</div>
  <div class="abs dl" style="left:901px;top:135px">At sea</div>
  <div class="abs bar" style="left:967.500px;top:138px"><i style="width:83px"></i></div>
  <div class="abs bv" style="left:1040px;top:135px">374.3 mt</div>
  <div class="abs dl" style="left:901px;top:167px">In Port</div>
  <div class="abs bar" style="left:967.500px;top:170px"><i style="width:3.500px;border-radius:3px 0 0 3px"></i></div>
  <div class="abs bv" style="left:1040px;top:167px">15.0 mt</div>
  <div class="abs" style="left:1135px;top:79px;width:1px;height:204px;background:#d6d6d6"></div>

  <!-- co2 -->
  <div class="abs" style="left:1155px;top:86px;font-size:13.500px;font-weight:bold;line-height:14px;color:#555;letter-spacing:.7px">co<span style="font-size:9.500px;position:relative;top:4px">2</span></div>
  <div class="abs" style="left:1210px;top:79.500px;width:159px;text-align:right;font-size:12px;line-height:14px;color:#444;white-space:nowrap;letter-spacing:.1px">CO2 Emissions</div>
  <div class="abs sv" style="left:1210px;top:97px;width:159px;text-align:right">1,212.4 mt</div>
  <div class="abs dl" style="left:1152px;top:135px;letter-spacing:-.45px">EU MRV</div>
  <div class="abs bar" style="left:1217px;top:138px"><i style="width:86px"></i></div>
  <div class="abs bv" style="left:1290px;top:135px">1,212.4 mt</div>
  <div class="abs dl" style="left:1152px;top:167px;letter-spacing:-.45px">EU ETS</div>
  <div class="abs bar" style="left:1217px;top:170px"><i style="width:56.500px"></i></div>
  <div class="abs bv" style="left:1290px;top:167px">781.4 mt</div>
<!--VOY-END-->
</div>

<!-- ================= TABS ================= -->
<div id="tabs">
<!--TABS-START-->
  <div class="abs" style="left:503px;top:541px;width:1401px;height:1px;background:#e4e4e4"></div>
  <div class="abs" style="left:502px;top:538.500px;width:119px;height:2.500px;background:#2f6bff"></div>
  <div class="abs" style="left:526px;top:512px;font-size:14px;line-height:18px;color:#2f6bff;white-space:nowrap;letter-spacing:.1px">Leg Details</div>
  <div class="abs" style="left:645px;top:512px;font-size:14px;line-height:18px;color:#444;white-space:nowrap">Map</div>
<!--TABS-END-->
</div>

<!-- ================= TABLE CARD ================= -->
<div id="tbl" style="left:504px;top:559px;width:1397px;height:621px;">
<!--TBL-START-->
  <div class="abs" style="left:0;top:0;width:1395px;height:80.2px;background:#e9effb;border-radius:3px 3px 0 0"></div>
  <div class="abs" style="left:0;top:31px;width:1395px;height:1px;background:#d8e2f6"></div>
  <div class="abs" style="left:0;top:80.2px;width:1395px;height:1px;background:#d8e2f6"></div>
  <div class="abs" style="left:421.8px;top:0;width:1px;height:80.2px;background:#d3def4"></div>
  <div class="abs" style="left:699.3px;top:0;width:1px;height:80.2px;background:#d3def4"></div>
  <div class="abs" style="left:906px;top:0;width:1px;height:80.2px;background:#d3def4"></div>
  <div class="abs" style="left:1179.2px;top:0;width:1px;height:80.2px;background:#d3def4"></div>
  <div class="abs" style="left:168px;top:31px;width:1px;height:49.2px;background:#dbe4f7"></div>
  <div class="abs" style="left:258.6px;top:31px;width:1px;height:49.2px;background:#dbe4f7"></div>
  <div class="abs" style="left:551.4px;top:31px;width:1px;height:49.2px;background:#dbe4f7"></div>
  <div class="abs" style="left:611.7px;top:31px;width:1px;height:49.2px;background:#dbe4f7"></div>
  <div class="abs" style="left:805.3px;top:31px;width:1px;height:49.2px;background:#dbe4f7"></div>
  <div class="abs" style="left:1025.7px;top:31px;width:1px;height:49.2px;background:#dbe4f7"></div>
  <div class="abs" style="left:1104.2px;top:31px;width:1px;height:49.2px;background:#dbe4f7"></div>
  <div class="abs" style="left:1305px;top:31px;width:1px;height:49.2px;background:#dbe4f7"></div>
  <div class="abs gh" style="left:434.8px;top:9.500px">Speed &amp; Duration</div>
  <div class="abs gh" style="left:712.3px;top:9.500px">Consumption</div>
  <div class="abs gh" style="left:919px;top:9.500px">Emissions</div>
  <div class="abs gh" style="left:1192.2px;top:9.500px">Leg &amp; Port CII</div>
  <div class="abs ch" style="left:7.6px;top:49px">Leg</div>
  <div class="abs ch" style="left:177px;top:42px;line-height:13.500px">Load<br>Condition</div>
  <div class="abs ch" style="left:267.6px;top:40px">Total Dist.<br><span class="u">(nm)</span></div>
  <div class="abs ch" style="left:430.8px;top:40px">Calm Sea Speed<br><span class="u">(kts)</span></div>
  <div class="abs ch" style="left:560.4px;top:40px">SOG<br><span class="u">(nm)</span></div>
  <div class="abs ch" style="left:620.7px;top:40px">Duration<br><span class="u">(days)</span></div>
  <div class="abs ch" style="left:708.3px;top:40px">At Sea<br><span class="u">(mt)</span></div>
  <div class="abs ch" style="left:814.3px;top:40px">In Port<br><span class="u">(mt)</span></div>
  <div class="abs ch" style="left:915px;top:40px">CO2 Emissions<br><span class="u">(mt)</span></div>
  <div class="abs ch" style="left:1034.7px;top:40px">EU MRV<br><span class="u">(mt)</span></div>
  <div class="abs ch" style="left:1113.2px;top:40px">EU ETS<br><span class="u">(mt)</span></div>
  <div class="abs ch" style="left:1188.2px;top:40px">Simulated CII<br><span class="u">(gCO2/(mt×nm))</span></div>
  <div class="abs ch" style="left:1314px;top:49px">CII Rating</div>
  <div class="abs" style="left:168px;top:80.2px;width:1px;height:239.4px;background:#dee6f7"></div>
  <div class="abs" style="left:258.6px;top:80.2px;width:1px;height:239.4px;background:#dee6f7"></div>
  <div class="abs" style="left:421.8px;top:80.2px;width:1px;height:239.4px;background:#dee6f7"></div>
  <div class="abs" style="left:551.4px;top:80.2px;width:1px;height:239.4px;background:#dee6f7"></div>
  <div class="abs" style="left:611.7px;top:80.2px;width:1px;height:239.4px;background:#dee6f7"></div>
  <div class="abs" style="left:699.3px;top:80.2px;width:1px;height:239.4px;background:#dee6f7"></div>
  <div class="abs" style="left:805.3px;top:80.2px;width:1px;height:239.4px;background:#dee6f7"></div>
  <div class="abs" style="left:906px;top:80.2px;width:1px;height:239.4px;background:#dee6f7"></div>
  <div class="abs" style="left:1025.7px;top:80.2px;width:1px;height:239.4px;background:#dee6f7"></div>
  <div class="abs" style="left:1104.2px;top:80.2px;width:1px;height:239.4px;background:#dee6f7"></div>
  <div class="abs" style="left:1179.2px;top:80.2px;width:1px;height:239.4px;background:#dee6f7"></div>
  <div class="abs" style="left:1305px;top:80.2px;width:1px;height:239.4px;background:#dee6f7"></div>
  <div class="abs" style="left:421.8px;top:120.1px;width:973.2px;height:1px;background:#dfe7f7"></div>
  <div class="abs" style="left:421.8px;top:160.0px;width:973.2px;height:1px;background:#dfe7f7"></div>
  <div class="abs" style="left:0;top:199.9px;width:1395px;height:1px;background:#dfe7f7"></div>
  <div class="abs" style="left:421.8px;top:239.8px;width:973.2px;height:1px;background:#dfe7f7"></div>
  <div class="abs" style="left:421.8px;top:279.7px;width:973.2px;height:1px;background:#dfe7f7"></div>
  <div class="abs" style="left:0;top:319.6px;width:1395px;height:1px;background:#dfe7f7"></div>
  <div class="abs td" style="left:7.6px;top:92.2px;letter-spacing:-.25px">SAVANNAH - LISBON</div>
  <div class="abs td" style="left:177px;top:92.2px">Laden</div>
  <div class="abs td" style="left:258.6px;top:86.2px;width:155.2px;text-align:right">3,487</div>
  <div class="abs sub" style="left:258.6px;top:104.2px;width:155.2px;text-align:right;font-size:11px;letter-spacing:0;margin-top:-.500px">598 ECA | 2,890 non-ECA</div>
  <div class="abs td" style="left:7.6px;top:211.9px;letter-spacing:-.25px">LISBON - ROTTERDAM</div>
  <div class="abs td" style="left:177px;top:211.9px">Laden</div>
  <div class="abs td" style="left:258.6px;top:205.9px;width:155.2px;text-align:right">1,101</div>
  <div class="abs sub" style="left:258.6px;top:223.9px;width:155.2px;text-align:right;font-size:11px;letter-spacing:0;margin-top:-.500px">413 ECA | 688 non-ECA</div>
  <div class="abs" style="left:431.3px;top:94.2px;width:35.500px;height:13px;border-radius:7px;background:#9a9a9a"></div>
  <div class="abs" style="left:430.8px;top:90.2px;width:21px;height:21px;border-radius:50%;background:#fff;box-shadow:0 1px 2px rgba(0,0,0,.22)"></div>
  <svg class="abs" style="left:473.8px;top:91.2px" width="18" height="18" viewBox="0 0 24 24" fill="#8c8c8c"><path d="M8 16h8v2H8zm0-4h8v2H8zm6-10H6c-1.100 0-2 .9-2 2v16c0 1.100.89 2 1.990 2H18c1.100 0 2-.9 2-2V8l-6-6zm4 18H6V4h7v5h5v11z"/></svg>
  <div class="abs td" style="left:499.8px;top:92.2px">12.0</div>
  <div class="abs td" style="left:551.4px;top:92.2px;width:52.3px;text-align:right">11.6</div>
  <div class="abs td" style="left:611.7px;top:92.2px;width:79.6px;text-align:right">12.6</div>
  <div class="abs td" style="left:699.3px;top:85.2px;width:98.0px;text-align:right">264.2</div>
  <div class="abs sub" style="left:699.3px;top:102.2px;width:97.0px;text-align:right">21.0 mt/24hrs</div>
  <div class="abs td" style="left:805.3px;top:85.2px;width:92.7px;text-align:right">6.0</div>
  <div class="abs sub" style="left:805.3px;top:102.2px;width:91.7px;text-align:right">6.0 mt/24hrs</div>
  <div class="abs td" style="left:906px;top:92.2px;width:111.7px;text-align:right">841.4</div>
  <div class="abs td" style="left:1025.7px;top:92.2px;width:70.5px;text-align:right">841.4</div>
  <div class="abs td" style="left:1104.2px;top:92.2px;width:67.0px;text-align:right">430.1</div>
  <div class="abs td" style="left:1179.2px;top:92.2px;width:117.8px;text-align:right">7.81</div>
  <div class="abs rt" style="left:1314px;top:87.2px;background:#f5a04e">D</div>
  <div class="abs" style="left:431.3px;top:134.1px;width:35.500px;height:13px;border-radius:7px;background:#7ea8f8"></div>
  <div class="abs" style="left:446.8px;top:130.1px;width:21px;height:21px;border-radius:50%;background:#0b5cff;box-shadow:0 1px 2px rgba(0,0,0,.3)"></div>
  <svg class="abs" style="left:473.8px;top:131.1px" width="18" height="18" viewBox="0 0 24 24" fill="#8c8c8c"><path d="M13 3v1h-2V3h2m-1 7.110l5.380 1.770 2.390.78-1.120 3.970c-.54-.3-.94-.71-1.140-.94L16 13.960l-1.510 1.720c-.34.4-1.280 1.320-2.490 1.320s-2.150-.92-2.490-1.320L8 13.960l-1.510 1.720c-.2.23-.6.63-1.140.93l-1.130-3.960 2.400-.79L12 10.110M15 1H9v3H6c-1.100 0-2 .9-2 2v4.620l-1.290.42c-.26.08-.48.26-.6.5s-.15.52-.06.78L3.950 19H4c1.600 0 3.020-.88 4-2 .98 1.120 2.400 2 4 2s3.020-.88 4-2c.98 1.120 2.400 2 4 2h.05l1.890-6.680c.08-.26.06-.54-.06-.78s-.34-.42-.6-.5L20 10.620V6c0-1.100-.9-2-2-2h-3V1zM6 9.970V6h12v3.970L12 8 6 9.970zm10 9.710c-1.220.85-2.610 1.280-4 1.280s-2.780-.43-4-1.280C6.780 20.530 5.390 21 4 21H2v2h2c1.380 0 2.740-.35 4-.99 1.260.64 2.630.97 4 .97s2.740-.32 4-.97c1.260.65 2.620.99 4 .99h2v-2h-2c-1.390 0-2.780-.47-4-1.320z"/></svg>
  <div class="abs td" style="left:499.8px;top:132.1px">13.0</div>
  <div class="abs td" style="left:551.4px;top:132.1px;width:52.3px;text-align:right">12.5</div>
  <div class="abs td" style="left:611.7px;top:132.1px;width:79.6px;text-align:right">11.6</div>
  <div class="abs td" style="left:699.3px;top:125.1px;width:98.0px;text-align:right">276.8</div>
  <div class="abs sub" style="left:699.3px;top:142.1px;width:97.0px;text-align:right">23.8 mt/24hrs</div>
  <div class="abs td" style="left:805.3px;top:125.1px;width:92.7px;text-align:right">6.0</div>
  <div class="abs sub" style="left:805.3px;top:142.1px;width:91.7px;text-align:right">6.0 mt/24hrs</div>
  <div class="abs td" style="left:906px;top:132.1px;width:111.7px;text-align:right">880.6</div>
  <div class="abs td" style="left:1025.7px;top:132.1px;width:70.5px;text-align:right">880.6</div>
  <div class="abs td" style="left:1104.2px;top:132.1px;width:67.0px;text-align:right">449.7</div>
  <div class="abs td" style="left:1179.2px;top:132.1px;width:117.8px;text-align:right">8.17</div>
  <div class="abs rt" style="left:1314px;top:127.1px;background:#f5a04e">D</div>
  <div class="abs" style="left:431.3px;top:174.0px;width:35.500px;height:13px;border-radius:7px;background:#9a9a9a"></div>
  <div class="abs" style="left:430.8px;top:170.0px;width:21px;height:21px;border-radius:50%;background:#fff;box-shadow:0 1px 2px rgba(0,0,0,.22)"></div>
  <svg class="abs" style="left:473.8px;top:171.0px" width="18" height="18" viewBox="0 0 24 24" fill="#8c8c8c"><path d="M13 3v1h-2V3h2m-1 7.110l5.380 1.770 2.390.78-1.120 3.970c-.54-.3-.94-.71-1.140-.94L16 13.960l-1.510 1.720c-.34.4-1.280 1.320-2.490 1.320s-2.150-.92-2.490-1.320L8 13.960l-1.510 1.720c-.2.23-.6.63-1.140.93l-1.130-3.960 2.400-.79L12 10.110M15 1H9v3H6c-1.100 0-2 .9-2 2v4.620l-1.290.42c-.26.08-.48.26-.6.5s-.15.52-.06.78L3.950 19H4c1.600 0 3.020-.88 4-2 .98 1.120 2.400 2 4 2s3.020-.88 4-2c.98 1.120 2.400 2 4 2h.05l1.890-6.680c.08-.26.06-.54-.06-.78s-.34-.42-.6-.5L20 10.620V6c0-1.100-.9-2-2-2h-3V1zM6 9.970V6h12v3.970L12 8 6 9.970zm10 9.710c-1.220.85-2.610 1.280-4 1.280s-2.780-.43-4-1.280C6.780 20.530 5.390 21 4 21H2v2h2c1.380 0 2.740-.35 4-.99 1.260.64 2.630.97 4 .97s2.740-.32 4-.97c1.260.65 2.620.99 4 .99h2v-2h-2c-1.390 0-2.780-.47-4-1.320z"/></svg>
  <div class="abs td" style="left:499.8px;top:172.0px">14.8</div>
  <div class="abs td" style="left:551.4px;top:172.0px;width:52.3px;text-align:right">14.2</div>
  <div class="abs td" style="left:611.7px;top:172.0px;width:79.6px;text-align:right">10.2</div>
  <div class="abs td" style="left:699.3px;top:165.0px;width:98.0px;text-align:right">312.9</div>
  <div class="abs sub" style="left:699.3px;top:182.0px;width:97.0px;text-align:right">30.7 mt/24hrs</div>
  <div class="abs td" style="left:805.3px;top:165.0px;width:92.7px;text-align:right">6.0</div>
  <div class="abs sub" style="left:805.3px;top:182.0px;width:91.7px;text-align:right">6.0 mt/24hrs</div>
  <div class="abs td" style="left:906px;top:172.0px;width:111.7px;text-align:right">993.1</div>
  <div class="abs td" style="left:1025.7px;top:172.0px;width:70.5px;text-align:right">993.1</div>
  <div class="abs td" style="left:1104.2px;top:172.0px;width:67.0px;text-align:right">505.9</div>
  <div class="abs td" style="left:1179.2px;top:172.0px;width:117.8px;text-align:right">9.22</div>
  <div class="abs rt" style="left:1314px;top:167.0px;background:#e5707a;width:28.500px">E</div>
  <div class="abs" style="left:431.3px;top:213.9px;width:35.500px;height:13px;border-radius:7px;background:#9a9a9a"></div>
  <div class="abs" style="left:430.8px;top:209.9px;width:21px;height:21px;border-radius:50%;background:#fff;box-shadow:0 1px 2px rgba(0,0,0,.22)"></div>
  <svg class="abs" style="left:473.8px;top:210.9px" width="18" height="18" viewBox="0 0 24 24" fill="#8c8c8c"><path d="M8 16h8v2H8zm0-4h8v2H8zm6-10H6c-1.100 0-2 .9-2 2v16c0 1.100.89 2 1.990 2H18c1.100 0 2-.9 2-2V8l-6-6zm4 18H6V4h7v5h5v11z"/></svg>
  <div class="abs td" style="left:499.8px;top:211.9px">12.0</div>
  <div class="abs td" style="left:551.4px;top:211.9px;width:52.3px;text-align:right">11.7</div>
  <div class="abs td" style="left:611.7px;top:211.9px;width:79.6px;text-align:right">3.9</div>
  <div class="abs td" style="left:699.3px;top:204.9px;width:98.0px;text-align:right">82.3</div>
  <div class="abs sub" style="left:699.3px;top:221.9px;width:97.0px;text-align:right">21.0 mt/24hrs</div>
  <div class="abs td" style="left:805.3px;top:204.9px;width:92.7px;text-align:right">9.0</div>
  <div class="abs sub" style="left:805.3px;top:221.9px;width:91.7px;text-align:right">6.0 mt/24hrs</div>
  <div class="abs td" style="left:906px;top:211.9px;width:111.7px;text-align:right">284.5</div>
  <div class="abs td" style="left:1025.7px;top:211.9px;width:70.5px;text-align:right">284.5</div>
  <div class="abs td" style="left:1104.2px;top:211.9px;width:67.0px;text-align:right">284.5</div>
  <div class="abs td" style="left:1179.2px;top:211.9px;width:117.8px;text-align:right">8.36</div>
  <div class="abs rt" style="left:1314px;top:206.9px;background:#f5a04e">D</div>
  <div class="abs" style="left:431.3px;top:253.8px;width:35.500px;height:13px;border-radius:7px;background:#9a9a9a"></div>
  <div class="abs" style="left:430.8px;top:249.8px;width:21px;height:21px;border-radius:50%;background:#fff;box-shadow:0 1px 2px rgba(0,0,0,.22)"></div>
  <svg class="abs" style="left:473.8px;top:250.8px" width="18" height="18" viewBox="0 0 24 24" fill="#8c8c8c"><path d="M13 3v1h-2V3h2m-1 7.110l5.380 1.770 2.390.78-1.120 3.970c-.54-.3-.94-.71-1.140-.94L16 13.960l-1.510 1.720c-.34.4-1.280 1.320-2.490 1.320s-2.150-.92-2.490-1.320L8 13.960l-1.510 1.720c-.2.23-.6.63-1.140.93l-1.130-3.960 2.400-.79L12 10.110M15 1H9v3H6c-1.100 0-2 .9-2 2v4.620l-1.290.42c-.26.08-.48.26-.6.5s-.15.52-.06.78L3.950 19H4c1.600 0 3.020-.88 4-2 .98 1.120 2.400 2 4 2s3.020-.88 4-2c.98 1.120 2.400 2 4 2h.05l1.890-6.680c.08-.26.06-.54-.06-.78s-.34-.42-.6-.5L20 10.620V6c0-1.100-.9-2-2-2h-3V1zM6 9.970V6h12v3.970L12 8 6 9.970zm10 9.710c-1.220.85-2.610 1.280-4 1.280s-2.780-.43-4-1.280C6.780 20.530 5.390 21 4 21H2v2h2c1.380 0 2.740-.35 4-.99 1.260.64 2.630.97 4 .97s2.740-.32 4-.97c1.260.65 2.620.99 4 .99h2v-2h-2c-1.390 0-2.780-.47-4-1.320z"/></svg>
  <div class="abs td" style="left:499.8px;top:251.8px">13.0</div>
  <div class="abs td" style="left:551.4px;top:251.8px;width:52.3px;text-align:right">12.7</div>
  <div class="abs td" style="left:611.7px;top:251.8px;width:79.6px;text-align:right">3.6</div>
  <div class="abs td" style="left:699.3px;top:244.8px;width:98.0px;text-align:right">86.3</div>
  <div class="abs sub" style="left:699.3px;top:261.8px;width:97.0px;text-align:right">23.8 mt/24hrs</div>
  <div class="abs td" style="left:805.3px;top:244.8px;width:92.7px;text-align:right">9.0</div>
  <div class="abs sub" style="left:805.3px;top:261.8px;width:91.7px;text-align:right">6.0 mt/24hrs</div>
  <div class="abs td" style="left:906px;top:251.8px;width:111.7px;text-align:right">296.7</div>
  <div class="abs td" style="left:1025.7px;top:251.8px;width:70.5px;text-align:right">296.7</div>
  <div class="abs td" style="left:1104.2px;top:251.8px;width:67.0px;text-align:right">296.7</div>
  <div class="abs td" style="left:1179.2px;top:251.8px;width:117.8px;text-align:right">8.72</div>
  <div class="abs rt" style="left:1314px;top:246.8px;background:#e5707a;width:28.500px">E</div>
  <div class="abs" style="left:431.3px;top:293.7px;width:35.500px;height:13px;border-radius:7px;background:#7ea8f8"></div>
  <div class="abs" style="left:446.8px;top:289.7px;width:21px;height:21px;border-radius:50%;background:#0b5cff;box-shadow:0 1px 2px rgba(0,0,0,.3)"></div>
  <svg class="abs" style="left:473.8px;top:290.7px" width="18" height="18" viewBox="0 0 24 24" fill="#8c8c8c"><path d="M13 3v1h-2V3h2m-1 7.110l5.380 1.770 2.390.78-1.120 3.970c-.54-.3-.94-.71-1.140-.94L16 13.960l-1.510 1.720c-.34.4-1.280 1.320-2.490 1.320s-2.150-.92-2.490-1.320L8 13.960l-1.510 1.720c-.2.23-.6.63-1.140.93l-1.130-3.960 2.400-.79L12 10.110M15 1H9v3H6c-1.100 0-2 .9-2 2v4.620l-1.290.42c-.26.08-.48.26-.6.5s-.15.52-.06.78L3.950 19H4c1.600 0 3.020-.88 4-2 .98 1.120 2.400 2 4 2s3.020-.88 4-2c.98 1.120 2.400 2 4 2h.05l1.890-6.680c.08-.26.06-.54-.06-.78s-.34-.42-.6-.5L20 10.620V6c0-1.100-.9-2-2-2h-3V1zM6 9.970V6h12v3.970L12 8 6 9.970zm10 9.710c-1.220.85-2.610 1.280-4 1.280s-2.780-.43-4-1.280C6.780 20.530 5.390 21 4 21H2v2h2c1.380 0 2.740-.35 4-.99 1.260.64 2.630.97 4 .97s2.740-.32 4-.97c1.260.65 2.620.99 4 .99h2v-2h-2c-1.390 0-2.780-.47-4-1.320z"/></svg>
  <div class="abs td" style="left:499.8px;top:291.7px">14.8</div>
  <div class="abs td" style="left:551.4px;top:291.7px;width:52.3px;text-align:right">14.4</div>
  <div class="abs td" style="left:611.7px;top:291.7px;width:79.6px;text-align:right">3.2</div>
  <div class="abs td" style="left:699.3px;top:284.7px;width:98.0px;text-align:right">97.5</div>
  <div class="abs sub" style="left:699.3px;top:301.7px;width:97.0px;text-align:right">30.7 mt/24hrs</div>
  <div class="abs td" style="left:805.3px;top:284.7px;width:92.7px;text-align:right">9.0</div>
  <div class="abs sub" style="left:805.3px;top:301.7px;width:91.7px;text-align:right">6.0 mt/24hrs</div>
  <div class="abs td" style="left:906px;top:291.7px;width:111.7px;text-align:right">331.8</div>
  <div class="abs td" style="left:1025.7px;top:291.7px;width:70.5px;text-align:right">331.8</div>
  <div class="abs td" style="left:1104.2px;top:291.7px;width:67.0px;text-align:right">331.8</div>
  <div class="abs td" style="left:1179.2px;top:291.7px;width:117.8px;text-align:right">9.75</div>
  <div class="abs rt" style="left:1314px;top:286.7px;background:#e5707a;width:28.500px">E</div>
  <div class="abs" style="left:0;top:603px;width:1395px;height:16px;background:#f1f1f1;border-radius:0 0 3px 3px"></div>
  <svg class="abs" style="left:6px;top:607px" width="5" height="8" viewBox="0 0 5 8"><path d="M5 0L0 4L5 8z" fill="#bdbdbd"/></svg>
  <svg class="abs" style="left:1384px;top:607px" width="5" height="8" viewBox="0 0 5 8"><path d="M0 0L5 4L0 8z" fill="#505050"/></svg>
<!--TBL-END-->
</div>
</body>
</html>
